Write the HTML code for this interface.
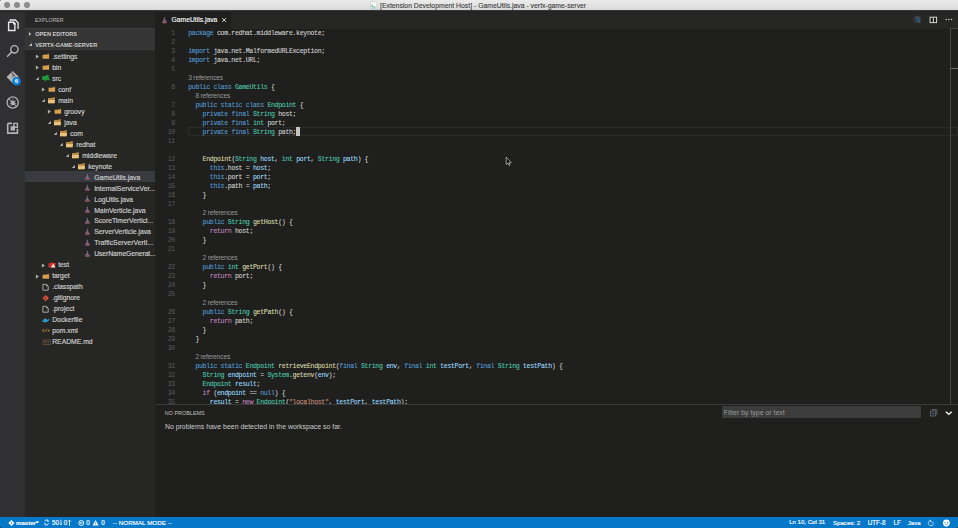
<!DOCTYPE html>
<html><head><meta charset="utf-8">
<style>
*{box-sizing:border-box}
html,body{margin:0;padding:0;width:958px;height:528px;overflow:hidden;background:#1f1f1d}
body{position:relative;font-family:"Liberation Sans",sans-serif}
.a{position:absolute;white-space:pre}
.ln{position:absolute;left:155px;width:19.9px;text-align:right;font:6.6px/9px "Liberation Mono",monospace;letter-spacing:-0.36px;color:#5a5a5a;white-space:pre}
.cl{position:absolute;font:6.6px/9px "Liberation Mono",monospace;letter-spacing:-0.36px;color:#d4d4d4;white-space:pre;-webkit-text-stroke:0.08px}
.lens{position:absolute;font:6.6px/9px "Liberation Sans",sans-serif;letter-spacing:-0.16px;color:#999999;white-space:pre}
.sel{position:absolute;left:25px;width:130px;height:11px;background:#3a3b40}
.tn{position:absolute;font-size:6.8px;line-height:11px;color:#d0d0d0;-webkit-text-stroke:0.15px #d0d0d0;white-space:pre}
#status .a{line-height:11px;font-size:6.2px;color:#fff;-webkit-text-stroke:0.15px #fff}
</style></head><body>
<!-- title bar -->
<div class="a" style="left:0;top:0;width:958px;height:10px;background:linear-gradient(#ebebeb 0%,#dedede 85%,#d0d0d0 100%)"></div>
<div class="a" style="left:0;top:10px;width:958px;height:1px;background:#3c3c3c"></div>
<div class="a" style="left:0;top:11px;width:958px;height:1px;background:#222222"></div>
<div class="a" style="left:380px;top:0.6px;font-size:6.85px;line-height:9px;color:#3a3a3a;-webkit-text-stroke:0.1px #3a3a3a">[Extension Development Host] - GameUtils.java - vertx-game-server</div>
<!-- activity bar -->
<div class="a" style="left:0;top:12px;width:25px;height:505px;background:#303033"></div>
<!-- sidebar -->
<div class="a" style="left:25px;top:12px;width:130px;height:505px;background:#262624"></div>
<div class="a" style="left:35px;top:16.8px;font-size:5.25px;line-height:6px;color:#bbbbbb">EXPLORER</div>
<div class="a" style="left:25px;top:28px;width:130px;height:22px;background:#353535"></div>
<div class="a" style="left:25px;top:27.8px;width:130px;height:0.7px;background:#3e3e3e"></div>
<div class="a" style="left:25px;top:49.3px;width:130px;height:0.7px;background:#3a3a3a"></div>
<div class="a" style="left:35.2px;top:28.5px;font-weight:bold;font-size:5.55px;line-height:11px;color:#cccccc">OPEN EDITORS</div>
<div class="a" style="left:35.2px;top:39.5px;font-weight:bold;font-size:5.6px;line-height:11px;color:#cccccc">VERTX-GAME-SERVER</div>
<div class="tn" style="top:50.8px;left:52.2px;letter-spacing:0.00px">.settings</div>
<div class="tn" style="top:61.8px;left:52.2px;letter-spacing:0.00px">bin</div>
<div class="tn" style="top:72.7px;left:52.2px;letter-spacing:0.00px">src</div>
<div class="tn" style="top:83.7px;left:58.2px;letter-spacing:0.00px">conf</div>
<div class="tn" style="top:94.7px;left:58.2px;letter-spacing:0.00px">main</div>
<div class="tn" style="top:105.7px;left:64.2px;letter-spacing:0.00px">groovy</div>
<div class="tn" style="top:116.7px;left:64.2px;letter-spacing:0.00px">java</div>
<div class="tn" style="top:127.6px;left:70.2px;letter-spacing:0.00px">com</div>
<div class="tn" style="top:138.6px;left:76.2px;letter-spacing:0.00px">redhat</div>
<div class="tn" style="top:149.6px;left:82.2px;letter-spacing:0.00px">middleware</div>
<div class="tn" style="top:160.6px;left:88.2px;letter-spacing:0.00px">keynote</div>
<div class="sel" style="top:171px"></div>
<div class="tn" style="top:171.5px;left:94.2px;letter-spacing:0.00px">GameUtils.java</div>
<div class="tn" style="top:182.5px;left:94.2px;letter-spacing:0.00px">InternalServiceVer...</div>
<div class="tn" style="top:193.5px;left:94.2px;letter-spacing:0.00px">LogUtils.java</div>
<div class="tn" style="top:204.5px;left:94.2px;letter-spacing:0.00px">MainVerticle.java</div>
<div class="tn" style="top:215.4px;left:94.2px;letter-spacing:0.00px">ScoreTimerVerticl...</div>
<div class="tn" style="top:226.4px;left:94.2px;letter-spacing:0.00px">ServerVerticle.java</div>
<div class="tn" style="top:237.4px;left:94.2px;letter-spacing:0.06px">TrafficServerVerti...</div>
<div class="tn" style="top:248.4px;left:94.2px;letter-spacing:-0.07px">UserNameGenerat...</div>
<div class="tn" style="top:259.4px;left:58.2px;letter-spacing:0.00px">test</div>
<div class="tn" style="top:270.3px;left:52.2px;letter-spacing:0.00px">target</div>
<div class="tn" style="top:281.3px;left:52.2px;letter-spacing:0.00px">.classpath</div>
<div class="tn" style="top:292.3px;left:52.2px;letter-spacing:0.00px">.gitignore</div>
<div class="tn" style="top:303.3px;left:52.2px;letter-spacing:0.00px">.project</div>
<div class="tn" style="top:314.2px;left:52.2px;letter-spacing:0.00px">Dockerfile</div>
<div class="tn" style="top:325.2px;left:52.2px;letter-spacing:0.00px">pom.xml</div>
<div class="tn" style="top:336.2px;left:52.2px;letter-spacing:0.00px">README.md</div>
<!-- editor tabs -->
<div class="a" style="left:155px;top:12px;width:803px;height:16.5px;background:#262624"></div>
<div class="a" style="left:155px;top:12px;width:76px;height:16.5px;background:#1f1f1d"></div>
<div class="a" style="left:171.5px;top:14.3px;font-size:6.75px;line-height:11px;color:#ffffff;-webkit-text-stroke:0.12px #fff">GameUtils.java</div>
<!-- current line -->
<div class="a" style="left:188px;top:127.3px;width:770px;height:8.8px;border:1px solid #2a2a29"></div>
<div class="a" style="left:296.2px;top:127px;width:3.8px;height:9px;background:#c4c4c0"></div>
<div class="ln" style="top:29.000px">1</div>
<div class="cl" style="top:29.000px;left:188.20px"><span style="color:#569cd6">package</span> com.redhat.middleware.keynote;</div>
<div class="ln" style="top:38.000px">2</div>
<div class="ln" style="top:47.000px">3</div>
<div class="cl" style="top:47.000px;left:188.20px"><span style="color:#569cd6">import</span> java.net.MalformedURLException;</div>
<div class="ln" style="top:56.000px">4</div>
<div class="cl" style="top:56.000px;left:188.20px"><span style="color:#569cd6">import</span> java.net.URL;</div>
<div class="ln" style="top:65.000px">5</div>
<div class="lens" style="top:72.800px;left:188.20px">3 references</div>
<div class="ln" style="top:83.000px">6</div>
<div class="cl" style="top:83.000px;left:188.20px"><span style="color:#569cd6">public</span> <span style="color:#569cd6">class</span> <span style="color:#4ec9b0">GameUtils</span> {</div>
<div class="lens" style="top:90.800px;left:195.40px">8 references</div>
<div class="ln" style="top:101.000px">7</div>
<div class="cl" style="top:101.000px;left:195.40px"><span style="color:#569cd6">public</span> <span style="color:#569cd6">static</span> <span style="color:#569cd6">class</span> <span style="color:#4ec9b0">Endpoint</span> {</div>
<div class="ln" style="top:110.000px">8</div>
<div class="cl" style="top:110.000px;left:202.60px"><span style="color:#569cd6">private</span> <span style="color:#569cd6">final</span> <span style="color:#4ec9b0">String</span> host;</div>
<div class="ln" style="top:119.000px">9</div>
<div class="cl" style="top:119.000px;left:202.60px"><span style="color:#569cd6">private</span> <span style="color:#569cd6">final</span> <span style="color:#4ec9b0">int</span> port;</div>
<div class="ln" style="top:128.000px">10</div>
<div class="cl" style="top:128.000px;left:202.60px"><span style="color:#569cd6">private</span> <span style="color:#569cd6">final</span> <span style="color:#4ec9b0">String</span> path;</div>
<div class="ln" style="top:137.000px">11</div>
<div class="ln" style="top:155.000px">12</div>
<div class="cl" style="top:155.000px;left:202.60px"><span style="color:#dcdcaa">Endpoint</span>(<span style="color:#4ec9b0">String</span> <span style="color:#9cdcfe">host</span>, <span style="color:#4ec9b0">int</span> <span style="color:#9cdcfe">port</span>, <span style="color:#4ec9b0">String</span> <span style="color:#9cdcfe">path</span>) {</div>
<div class="ln" style="top:164.000px">13</div>
<div class="cl" style="top:164.000px;left:209.80px"><span style="color:#569cd6">this</span>.host = <span style="color:#9cdcfe">host</span>;</div>
<div class="ln" style="top:173.000px">14</div>
<div class="cl" style="top:173.000px;left:209.80px"><span style="color:#569cd6">this</span>.port = <span style="color:#9cdcfe">port</span>;</div>
<div class="ln" style="top:182.000px">15</div>
<div class="cl" style="top:182.000px;left:209.80px"><span style="color:#569cd6">this</span>.path = <span style="color:#9cdcfe">path</span>;</div>
<div class="ln" style="top:191.000px">16</div>
<div class="cl" style="top:191.000px;left:202.60px">}</div>
<div class="ln" style="top:200.000px">17</div>
<div class="lens" style="top:207.800px;left:202.60px">2 references</div>
<div class="ln" style="top:218.000px">18</div>
<div class="cl" style="top:218.000px;left:202.60px"><span style="color:#569cd6">public</span> <span style="color:#4ec9b0">String</span> <span style="color:#dcdcaa">getHost</span>() {</div>
<div class="ln" style="top:227.000px">19</div>
<div class="cl" style="top:227.000px;left:209.80px"><span style="color:#c586c0">return</span> host;</div>
<div class="ln" style="top:236.000px">20</div>
<div class="cl" style="top:236.000px;left:202.60px">}</div>
<div class="ln" style="top:245.000px">21</div>
<div class="lens" style="top:252.800px;left:202.60px">2 references</div>
<div class="ln" style="top:263.000px">22</div>
<div class="cl" style="top:263.000px;left:202.60px"><span style="color:#569cd6">public</span> <span style="color:#4ec9b0">int</span> <span style="color:#dcdcaa">getPort</span>() {</div>
<div class="ln" style="top:272.000px">23</div>
<div class="cl" style="top:272.000px;left:209.80px"><span style="color:#c586c0">return</span> port;</div>
<div class="ln" style="top:281.000px">24</div>
<div class="cl" style="top:281.000px;left:202.60px">}</div>
<div class="ln" style="top:290.000px">25</div>
<div class="lens" style="top:297.800px;left:202.60px">2 references</div>
<div class="ln" style="top:308.000px">26</div>
<div class="cl" style="top:308.000px;left:202.60px"><span style="color:#569cd6">public</span> <span style="color:#4ec9b0">String</span> <span style="color:#dcdcaa">getPath</span>() {</div>
<div class="ln" style="top:317.000px">27</div>
<div class="cl" style="top:317.000px;left:209.80px"><span style="color:#c586c0">return</span> path;</div>
<div class="ln" style="top:326.000px">28</div>
<div class="cl" style="top:326.000px;left:202.60px">}</div>
<div class="ln" style="top:335.000px">29</div>
<div class="cl" style="top:335.000px;left:195.40px">}</div>
<div class="ln" style="top:344.000px">30</div>
<div class="lens" style="top:351.800px;left:195.40px">2 references</div>
<div class="ln" style="top:362.000px">31</div>
<div class="cl" style="top:362.000px;left:195.40px"><span style="color:#569cd6">public</span> <span style="color:#569cd6">static</span> <span style="color:#4ec9b0">Endpoint</span> <span style="color:#dcdcaa">retrieveEndpoint</span>(<span style="color:#569cd6">final</span> <span style="color:#4ec9b0">String</span> <span style="color:#9cdcfe">env</span>, <span style="color:#569cd6">final</span> <span style="color:#4ec9b0">int</span> <span style="color:#9cdcfe">testPort</span>, <span style="color:#569cd6">final</span> <span style="color:#4ec9b0">String</span> <span style="color:#9cdcfe">testPath</span>) {</div>
<div class="ln" style="top:371.000px">32</div>
<div class="cl" style="top:371.000px;left:202.60px"><span style="color:#4ec9b0">String</span> <span style="color:#9cdcfe">endpoint</span> = <span style="color:#4ec9b0">System</span>.<span style="color:#dcdcaa">getenv</span>(<span style="color:#9cdcfe">env</span>);</div>
<div class="ln" style="top:380.000px">33</div>
<div class="cl" style="top:380.000px;left:202.60px"><span style="color:#4ec9b0">Endpoint</span> <span style="color:#9cdcfe">result</span>;</div>
<div class="ln" style="top:389.000px">34</div>
<div class="cl" style="top:389.000px;left:202.60px"><span style="color:#c586c0">if</span> (<span style="color:#9cdcfe">endpoint</span> == <span style="color:#569cd6">null</span>) {</div>
<div class="ln" style="top:398.000px">35</div>
<div class="cl" style="top:398.000px;left:209.80px"><span style="color:#9cdcfe">result</span> = <span style="color:#c586c0">new</span> <span style="color:#4ec9b0">Endpoint</span>(<span style="color:#ce9178">&quot;localhost&quot;</span>, <span style="color:#9cdcfe">testPort</span>, <span style="color:#9cdcfe">testPath</span>);</div>
<!-- scrollbar -->
<div class="a" style="left:950.3px;top:28.5px;width:1px;height:375px;background:#474747"></div>
<div class="a" style="left:950.3px;top:28.3px;width:8px;height:0.8px;background:#474747"></div>
<div class="a" style="left:951px;top:67.6px;width:7px;height:0.9px;background:#6e6e6e"></div>
<!-- panel -->
<div class="a" style="left:155px;top:403.7px;width:803px;height:113.3px;background:#1f1f1d;border-top:0.9px solid #3a3a3a"></div>
<div class="a" style="left:164.8px;top:410.2px;font-size:5.45px;line-height:7px;color:#c0c0c0">NO PROBLEMS</div>
<div class="a" style="left:164.9px;top:421.8px;font-size:6.95px;line-height:9px;color:#cccccc">No problems have been detected in the workspace so far.</div>
<div class="a" style="left:722px;top:406px;width:199px;height:12px;background:#3c3c3c"></div>
<div class="a" style="left:723.8px;top:406.8px;font-size:6.95px;line-height:11px;color:#9a9a9a">Filter by type or text</div>
<!-- status bar -->
<div id="status">
<div class="a" style="left:0;top:517px;width:958px;height:11px;background:#0578ca"></div>
<div class="a" style="left:16px;top:517.3px;font-weight:bold;font-size:6.1px">master*</div>
<div class="a" style="left:52px;top:517.3px;font-size:6.3px">50</div>
<div class="a" style="left:63.7px;top:517.3px;font-size:6.3px">0</div>
<div class="a" style="left:86.3px;top:517.3px;font-size:6.3px">0</div>
<div class="a" style="left:101.2px;top:517.3px;font-size:6.3px">0</div>
<div class="a" style="left:112.8px;top:517.3px;font-size:6.25px;letter-spacing:0.02px">-- NORMAL MODE --</div>
<div class="a" style="left:789.2px;top:517.3px;font-size:6.05px">Ln 10, Col 31</div>
<div class="a" style="left:832.9px;top:517.3px;font-size:6.15px">Spaces: 2</div>
<div class="a" style="left:867.7px;top:517.3px;font-size:6.3px">UTF-8</div>
<div class="a" style="left:893.6px;top:517.3px;font-size:6.3px">LF</div>
<div class="a" style="left:907.7px;top:517.3px;font-size:6.15px">Java</div>
</div>
<svg class="a" style="left:0;top:0" width="958" height="528" viewBox="0 0 958 528">
<!-- traffic lights -->
<circle cx="7.1" cy="5" r="3" fill="#8b8b8b"/><circle cx="17" cy="5" r="3" fill="#8b8b8b"/><circle cx="27" cy="5" r="3" fill="#8b8b8b"/>
<rect x="0" y="0" width="0.7" height="0.7" fill="#333"/>
<!-- title icon -->
<path d="M370.6 1.4h4.4l1.8 1.8v6.2h-6.2z" fill="#f6f6f6" stroke="#b8b8b8" stroke-width="0.5"/>
<path d="M371.6 5.2l1.2 0.9-1.2 0.9M373.2 7h2" stroke="#2e8b3e" stroke-width="0.8" fill="none"/>
<rect x="371" y="7.6" width="5.4" height="1.2" fill="#9fd0ea"/>
<!-- explorer icon -->
<path d="M10.3 21.5V20h5l2.8 2.8v6.2" fill="none" stroke="#e6e6e6" stroke-width="1.3"/>
<path d="M8.6 22.3h4.7l1.6 1.6v6.6h-6.3z" fill="#303033" stroke="#e6e6e6" stroke-width="1.4"/>
<path d="M13 21.6h0.8l2.2 2.2v0.8H13z" fill="#e6e6e6"/>
<!-- search -->
<circle cx="14.4" cy="49.3" r="3.7" fill="none" stroke="#b5b5b5" stroke-width="1.4"/>
<path d="M11.7 52L7.6 56.2" stroke="#b5b5b5" stroke-width="1.5" stroke-linecap="round"/>
<!-- git -->
<path d="M12.7 70.9l6.2 6.2-6.2 6.2-6.1-6.2z" fill="#b3b3b3"/>
<path d="M11.6 72.2l1.4 1.9 0 3M13 74.1l2.3 2.3" stroke="#303033" stroke-width="0.8" fill="none"/>
<circle cx="16.6" cy="81.2" r="4.3" fill="#0e7fd6"/>
<text x="16.5" y="83.4" font-size="6" font-weight="bold" fill="#fff" text-anchor="middle" font-family="Liberation Sans">6</text>
<!-- debug -->
<circle cx="12.7" cy="102.5" r="5.6" fill="none" stroke="#b3b3b3" stroke-width="1.3"/>
<path d="M8.8 98.6l7.8 7.8" stroke="#b3b3b3" stroke-width="1"/>
<ellipse cx="12.9" cy="102.9" rx="2" ry="2.4" fill="#b3b3b3"/>
<path d="M9.9 100.8l1.6 1M15.9 100.8l-1.6 1M9.7 103.6h1.6M14.3 103.6h1.8M10 105.8l1.5-1M15.8 105.8l-1.5-1M12.9 99.7v-1.2" stroke="#b3b3b3" stroke-width="0.7"/>
<!-- extensions -->
<path d="M7.7 123.4h4.3M7.7 123.4v9.7h9.7v-4.3" fill="none" stroke="#b3b3b3" stroke-width="1.6"/>
<path d="M13.8 123.4h3.6v3.8h-3.6z" fill="none" stroke="#b3b3b3" stroke-width="1.4"/>
<rect x="10.6" y="126.2" width="4.4" height="4.4" fill="#b3b3b3"/>
<path d="M35.90 54.50l3.1 2.1-3.1 2.1z" fill="#a8a8a8"/>
<path d="M42.60 54.70h6.5v4h-6.5z" fill="#dba350"/><path d="M45.40 54.70l3.7-1.3v1.3z" fill="#c48d3e"/><path d="M42.60 56.60h6.5" stroke="#c8913f" stroke-width="0.5"/>
<path d="M35.90 65.50l3.1 2.1-3.1 2.1z" fill="#a8a8a8"/>
<path d="M42.60 65.70h6.5v4h-6.5z" fill="#dba350"/><path d="M45.40 65.70l3.7-1.3v1.3z" fill="#c48d3e"/><path d="M42.60 67.60h6.5" stroke="#c8913f" stroke-width="0.5"/>
<path d="M38.90 79.90h-3.1l3.1-3.1z" fill="#b0b0b0"/>
<path d="M42.00 76.40 L45.50 75.90 L46.50 74.70 L48.80 75.20 L48.50 76.90 L49.90 80.20 L46.50 80.00 L45.30 81.40 L44.00 79.90 L42.20 79.80z" fill="#1f9a2e"/><path d="M42.50 76.50h3.2v1h-3.2z" fill="#3a8a7a" opacity="0.7"/>
<path d="M41.90 87.50l3.1 2.1-3.1 2.1z" fill="#a8a8a8"/>
<path d="M48.60 87.70h6.5v4h-6.5z" fill="#dba350"/><path d="M51.40 87.70l3.7-1.3v1.3z" fill="#c48d3e"/><path d="M48.60 89.60h6.5" stroke="#c8913f" stroke-width="0.5"/>
<path d="M44.90 101.90h-3.1l3.1-3.1z" fill="#b0b0b0"/>
<path d="M48.00 98.00h6.8v5.2h-6.8z" fill="#b98a45"/><path d="M51.00 98.00l3.8-1.1v1.1z" fill="#b98a45"/><path d="M48.00 99.90h7l-0.5 3.3h-6.5z" fill="#e8c27e"/>
<path d="M47.90 109.50l3.1 2.1-3.1 2.1z" fill="#a8a8a8"/>
<path d="M54.60 109.70h6.5v4h-6.5z" fill="#dba350"/><path d="M57.40 109.70l3.7-1.3v1.3z" fill="#c48d3e"/><path d="M54.60 111.60h6.5" stroke="#c8913f" stroke-width="0.5"/>
<path d="M50.90 123.90h-3.1l3.1-3.1z" fill="#b0b0b0"/>
<path d="M54.00 120.00h6.8v5.2h-6.8z" fill="#b98a45"/><path d="M57.00 120.00l3.8-1.1v1.1z" fill="#b98a45"/><path d="M54.00 121.90h7l-0.5 3.3h-6.5z" fill="#e8c27e"/>
<path d="M56.90 134.90h-3.1l3.1-3.1z" fill="#b0b0b0"/>
<path d="M60.00 131.00h6.8v5.2h-6.8z" fill="#b98a45"/><path d="M63.00 131.00l3.8-1.1v1.1z" fill="#b98a45"/><path d="M60.00 132.90h7l-0.5 3.3h-6.5z" fill="#e8c27e"/>
<path d="M62.90 145.90h-3.1l3.1-3.1z" fill="#b0b0b0"/>
<path d="M66.00 142.00h6.8v5.2h-6.8z" fill="#b98a45"/><path d="M69.00 142.00l3.8-1.1v1.1z" fill="#b98a45"/><path d="M66.00 143.90h7l-0.5 3.3h-6.5z" fill="#e8c27e"/>
<path d="M68.90 156.90h-3.1l3.1-3.1z" fill="#b0b0b0"/>
<path d="M72.00 153.00h6.8v5.2h-6.8z" fill="#b98a45"/><path d="M75.00 153.00l3.8-1.1v1.1z" fill="#b98a45"/><path d="M72.00 154.90h7l-0.5 3.3h-6.5z" fill="#e8c27e"/>
<path d="M74.90 167.90h-3.1l3.1-3.1z" fill="#b0b0b0"/>
<path d="M78.00 164.00h6.8v5.2h-6.8z" fill="#b98a45"/><path d="M81.00 164.00l3.8-1.1v1.1z" fill="#b98a45"/><path d="M78.00 165.90h7l-0.5 3.3h-6.5z" fill="#e8c27e"/>
<path d="M87.30 173.60c0.9 0.6 0.9 1.6 0.2 2.4 0.9 0.4 1.4 1.2 1.6 2h-3.6c0.2-0.9 0.8-1.6 1.5-2-0.5-0.8-0.4-1.7 0.3-2.4z" fill="#7e6a8e"/><path d="M84.80 178.20h5.4c0 0.9-0.9 1.6-2.7 1.6s-2.7-0.7-2.7-1.6z" fill="#9a6272"/>
<path d="M87.30 184.60c0.9 0.6 0.9 1.6 0.2 2.4 0.9 0.4 1.4 1.2 1.6 2h-3.6c0.2-0.9 0.8-1.6 1.5-2-0.5-0.8-0.4-1.7 0.3-2.4z" fill="#7e6a8e"/><path d="M84.80 189.20h5.4c0 0.9-0.9 1.6-2.7 1.6s-2.7-0.7-2.7-1.6z" fill="#9a6272"/>
<path d="M87.30 195.60c0.9 0.6 0.9 1.6 0.2 2.4 0.9 0.4 1.4 1.2 1.6 2h-3.6c0.2-0.9 0.8-1.6 1.5-2-0.5-0.8-0.4-1.7 0.3-2.4z" fill="#7e6a8e"/><path d="M84.80 200.20h5.4c0 0.9-0.9 1.6-2.7 1.6s-2.7-0.7-2.7-1.6z" fill="#9a6272"/>
<path d="M87.30 206.60c0.9 0.6 0.9 1.6 0.2 2.4 0.9 0.4 1.4 1.2 1.6 2h-3.6c0.2-0.9 0.8-1.6 1.5-2-0.5-0.8-0.4-1.7 0.3-2.4z" fill="#7e6a8e"/><path d="M84.80 211.20h5.4c0 0.9-0.9 1.6-2.7 1.6s-2.7-0.7-2.7-1.6z" fill="#9a6272"/>
<path d="M87.30 217.60c0.9 0.6 0.9 1.6 0.2 2.4 0.9 0.4 1.4 1.2 1.6 2h-3.6c0.2-0.9 0.8-1.6 1.5-2-0.5-0.8-0.4-1.7 0.3-2.4z" fill="#7e6a8e"/><path d="M84.80 222.20h5.4c0 0.9-0.9 1.6-2.7 1.6s-2.7-0.7-2.7-1.6z" fill="#9a6272"/>
<path d="M87.30 228.60c0.9 0.6 0.9 1.6 0.2 2.4 0.9 0.4 1.4 1.2 1.6 2h-3.6c0.2-0.9 0.8-1.6 1.5-2-0.5-0.8-0.4-1.7 0.3-2.4z" fill="#7e6a8e"/><path d="M84.80 233.20h5.4c0 0.9-0.9 1.6-2.7 1.6s-2.7-0.7-2.7-1.6z" fill="#9a6272"/>
<path d="M87.30 239.60c0.9 0.6 0.9 1.6 0.2 2.4 0.9 0.4 1.4 1.2 1.6 2h-3.6c0.2-0.9 0.8-1.6 1.5-2-0.5-0.8-0.4-1.7 0.3-2.4z" fill="#7e6a8e"/><path d="M84.80 244.20h5.4c0 0.9-0.9 1.6-2.7 1.6s-2.7-0.7-2.7-1.6z" fill="#9a6272"/>
<path d="M87.30 250.60c0.9 0.6 0.9 1.6 0.2 2.4 0.9 0.4 1.4 1.2 1.6 2h-3.6c0.2-0.9 0.8-1.6 1.5-2-0.5-0.8-0.4-1.7 0.3-2.4z" fill="#7e6a8e"/><path d="M84.80 255.20h5.4c0 0.9-0.9 1.6-2.7 1.6s-2.7-0.7-2.7-1.6z" fill="#9a6272"/>
<path d="M41.90 263.50l3.1 2.1-3.1 2.1z" fill="#a8a8a8"/>
<path d="M48.50 263.60l3.4-1.6 1 1h3.1l-1.2 4.6h-6.3z" fill="#c9302c"/><path d="M50.70 267.60l2.6-4 2.2 4z" fill="#f2e2cc"/>
<path d="M35.90 274.50l3.1 2.1-3.1 2.1z" fill="#a8a8a8"/>
<path d="M42.60 274.70h6.5v4h-6.5z" fill="#dba350"/><path d="M45.40 274.70l3.7-1.3v1.3z" fill="#c48d3e"/><path d="M42.60 276.60h6.5" stroke="#c8913f" stroke-width="0.5"/>
<path d="M42.90 284.30h3.4l1.9 1.9v4.0h-5.3z" fill="none" stroke="#c5c5c5" stroke-width="0.8"/><path d="M46.30 284.30l1.9 1.9h-1.9z" fill="#c5c5c5"/>
<path d="M45.65 294.90l3.15 3.15-3.15 3.2-3.15-3.2z" fill="#e8543b"/><path d="M45.10 296.50v3.2M45.10 297.50l1.2 1.2" stroke="#1e1e1e" stroke-width="0.6"/>
<path d="M42.90 306.30h3.4l1.9 1.9v4.0h-5.3z" fill="none" stroke="#c5c5c5" stroke-width="0.8"/><path d="M46.30 306.30l1.9 1.9h-1.9z" fill="#c5c5c5"/>
<path d="M42.20 320.30 L47.60 320.10 L49.50 318.20 L49.00 320.20 L48.20 321.00 L46.40 322.20 L43.60 322.20 L42.30 321.10z" fill="#2f9fe0"/><path d="M43.60 318.80h3.2v1.3h-3.2z" fill="#2f9fe0"/>
<path d="M44.20 329.25l-1.9 1.25 1.9 1.25M47.60 329.25l1.9 1.25-1.9 1.25M46.50 329.20l-1.1 2.6" stroke="#e0a03a" stroke-width="0.75" fill="none"/>
<rect x="42.95" y="339.95" width="7.8" height="4.6" fill="none" stroke="#5c4d3e" stroke-width="0.9"/><path d="M44.30 343.40v-2.6l1 1.2 1-1.2v2.6M48.30 340.80v2.4M47.50 342.40l0.8 0.8 0.8-0.8" stroke="#6e5c49" stroke-width="0.7" fill="none"/>
<!-- sidebar header arrows -->
<path d="M28.9 32v3.8l2.4-1.9z" fill="#c0c0c0"/>
<path d="M32 42.9v3.2h-3.2z" fill="#c0c0c0"/>
<!-- tab java icon -->
<path d="M164.4 16.9c0.9 0.6 0.9 1.6 0.2 2.4 0.9 0.4 1.4 1.2 1.6 2h-3.6c0.2-0.9 0.8-1.6 1.5-2-0.5-0.8-0.4-1.7 0.3-2.4z" fill="#7e6a8e"/>
<path d="M161.8 21.5h5.4c0 0.9-0.9 1.9-2.7 1.9s-2.7-1-2.7-1.9z" fill="#9a6272"/>
<!-- tab close -->
<path d="M222.3 18.2l3.7 3.7M226 18.2l-3.7 3.7" stroke="#e8e8e8" stroke-width="0.95"/>
<!-- editor actions -->
<circle cx="917" cy="19.6" r="3.4" fill="none" stroke="#4a4a4a" stroke-width="0.9"/>
<circle cx="917.6" cy="19.3" r="1.6" fill="none" stroke="#3f86c2" stroke-width="0.9"/>
<path d="M918.6 20.6l1.8 2.2" stroke="#3f86c2" stroke-width="0.9"/>
<rect x="930.1" y="17.2" width="6.5" height="5.4" fill="#1a1a1a" stroke="#d8d8d8" stroke-width="1"/>
<path d="M933.35 17.2v5.4" stroke="#d8d8d8" stroke-width="1"/>
<circle cx="946.3" cy="19.5" r="0.75" fill="#d0d0d0"/><circle cx="948.9" cy="19.5" r="0.75" fill="#d0d0d0"/><circle cx="951.5" cy="19.5" r="0.75" fill="#d0d0d0"/>
<!-- mouse pointer -->
<path d="M506.2 157.2v7.3l1.7-1.5 1.1 2.4 1-0.45-1.1-2.3h2.4z" fill="#0c0c0c" stroke="#dcdcdc" stroke-width="0.65" stroke-linejoin="round"/>
<!-- panel icons -->
<path d="M930.4 411h5v5h-5z" fill="none" stroke="#6a6a6a" stroke-width="0.9"/>
<path d="M931.8 409.6h5v5" fill="none" stroke="#6a6a6a" stroke-width="0.9"/>
<circle cx="932.9" cy="413.5" r="1" fill="#2a78b8"/>
<path d="M945.8 411.7l3 2.6 3-2.6" fill="none" stroke="#f0f0f0" stroke-width="1.4"/>
<!-- status icons -->
<path d="M11.4 520.1l3.1 2.9-3.1 2.9-3.1-2.9z" fill="#fff"/>
<path d="M10.7 521.7l1.3 1.3-1.3 1.3" stroke="#007acc" stroke-width="0.7" fill="none"/>
<path d="M44.6 521.4a2.3 2.3 0 0 1 3.9-0.6M48.6 523.4a2.3 2.3 0 0 1-3.9 0.9" fill="none" stroke="#fff" stroke-width="0.9"/>
<path d="M47.6 519.8l1.3 1.6-1.9 0.3z M45.3 525.1l-1.3-1.6 1.9-0.3z" fill="#fff"/>
<path d="M61 519.6v5.1M59.9 523.6l1.1 1.3 1.1-1.3" stroke="#fff" stroke-width="0.8" fill="none"/>
<path d="M69.5 525.8v-5.6M68.4 521.3l1.1-1.3 1.1 1.3" stroke="#fff" stroke-width="0.8" fill="none"/>
<circle cx="81.3" cy="523" r="2.5" fill="none" stroke="#fff" stroke-width="0.9"/>
<path d="M80.2 521.9l2.2 2.2M82.4 521.9l-2.2 2.2" stroke="#fff" stroke-width="0.8"/>
<path d="M95.6 519.9l3 5.6h-6z" fill="#fff"/><path d="M95.6 521.8v2M95.6 524.3v0.6" stroke="#007acc" stroke-width="0.6"/>
<path d="M929.5 525.2c-1.2-0.6-1.6-2.4-0.8-3.7l1.6-1.6c0.4 0.6 0.4 1.1 0 1.7 1.5-0.4 3 0.6 3 2.2 0 1.3-1.3 2.4-3.8 1.4z" fill="none" stroke="#fff" stroke-width="0.7"/>
<circle cx="946.4" cy="523" r="3.4" fill="#fff"/>
<circle cx="945.1" cy="522.2" r="0.55" fill="#007acc"/><circle cx="947.7" cy="522.2" r="0.55" fill="#007acc"/>
<path d="M944.7 523.7q1.7 1.5 3.4 0" stroke="#007acc" stroke-width="0.6" fill="none"/>
<rect x="957" y="527" width="1" height="1" fill="#333"/><rect x="0" y="527" width="1" height="1" fill="#333"/>
</svg>
</body></html>
